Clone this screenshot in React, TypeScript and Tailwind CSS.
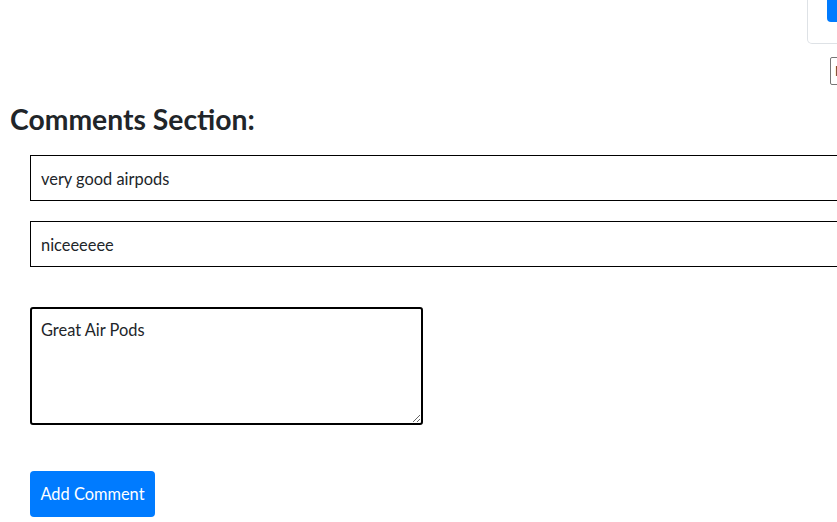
export default function App() {
  const font = { fontFamily: 'Lato, "Noto Sans", "Liberation Sans", sans-serif' };
  return (
    <div className="w-[837px] h-[522px] overflow-hidden bg-white text-[#212529]" style={font}>
      {/* top right leftovers */}
      <div className="flex justify-end">
        <div className="w-[200px] -mr-[170px] h-[44px] border border-t-0 border-[#dee2e6] rounded-b-[5px] pl-[19px]">
          <div className="h-[22px] bg-[#007bff] rounded-bl-[4px]" />
        </div>
      </div>
      <div className="flex justify-end mt-[13px]">
        <input
          readOnly
          value="No file"
          className="w-[200px] -mr-[193px] h-[28px] border border-[#767676] rounded-[2px] px-[4px] text-[13px] outline-none"
        />
      </div>

      <h3 className="mt-[17px] ml-[10px] text-[28.3px] leading-[34px] font-bold text-[#212529]">
        Comments Section:
      </h3>

      <div className="mt-[19px] ml-[30px] flex flex-col">
        <input
          readOnly
          value="very good airpods"
          className="w-[850px] h-[46px] border border-black px-[10px] text-[16.4px] text-[#212529] outline-none"
        />
        <input
          readOnly
          value="niceeeeee"
          className="mt-[20px] w-[850px] h-[46px] border border-black px-[10px] text-[16.4px] text-[#212529] outline-none"
        />
        <textarea
          readOnly
          value="Great Air Pods"
          className="mt-[40px] w-[393px] h-[118px] border-2 border-black rounded-[3px] px-[9px] py-[9px] text-[16.4px] leading-[24px] text-[#212529] outline-none"
        />
        <div className="mt-[46px]">
          <button className="w-[125px] h-[46px] bg-[#007bff] text-white text-[16.4px] rounded-[4px]">
            Add Comment
          </button>
        </div>
      </div>
    </div>
  );
}
